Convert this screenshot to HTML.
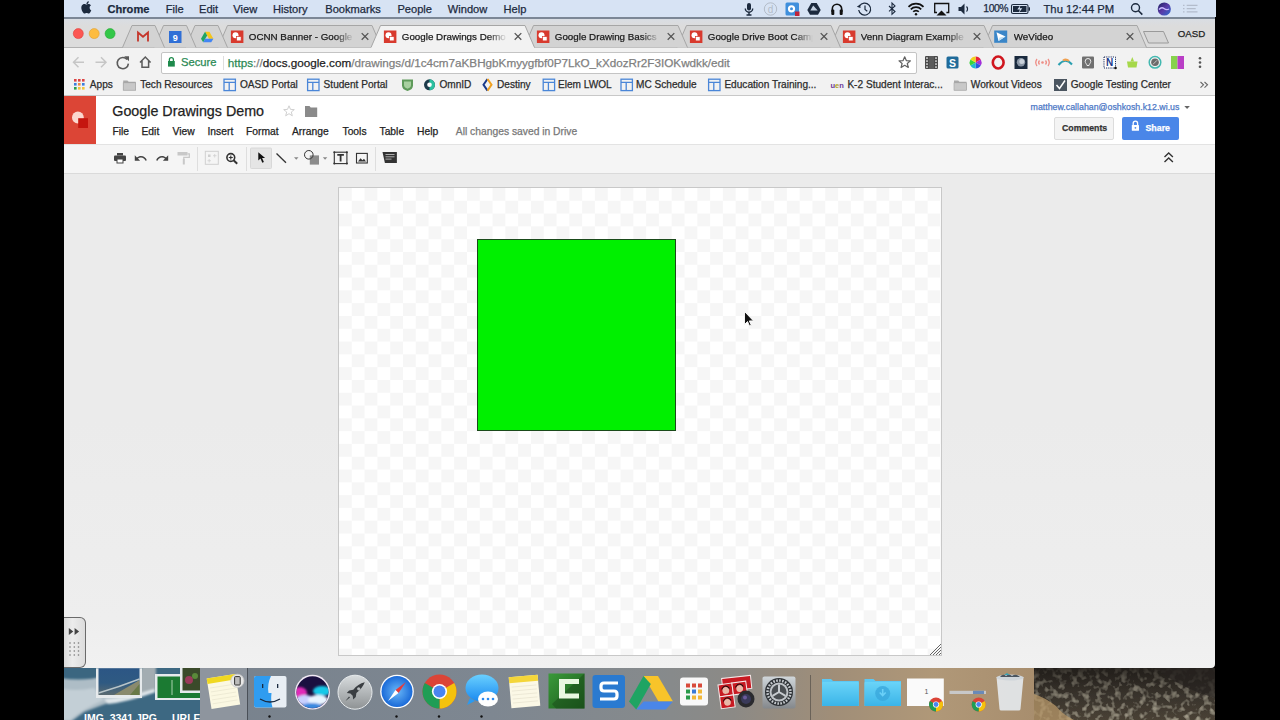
<!DOCTYPE html>
<html><head><meta charset="utf-8">
<style>
*{margin:0;padding:0;box-sizing:border-box}
html,body{width:1280px;height:720px;overflow:hidden;background:#000;font-family:"Liberation Sans",sans-serif;position:relative}
.a{position:absolute}
.t{position:absolute;white-space:nowrap;line-height:1;-webkit-text-stroke:0.25px currentColor}
svg{position:absolute;overflow:visible}
.mb{font-size:11.1px;color:#1c2a3e;top:4px}
.tabt{font-size:9.8px;color:#1a1a1a;top:32px}
.bm{font-size:10.1px;color:#2c2c2c;top:80px}
.menu{font-size:10.3px;color:#222;top:126.5px}
</style></head><body>
<!-- backgrounds -->
<div class="a" style="left:64px;top:0;width:1152px;height:17px;background:#d7e3f4"></div>
<div class="a" style="left:64px;top:17px;width:1151px;height:1.5px;background:#7c8796"></div>
<div class="a" style="left:64px;top:18.5px;width:1151px;height:29px;background:linear-gradient(#d9dde3,#dcdcdc 25%,#dcdcdc)"></div>
<div class="a" style="left:64px;top:47px;width:1151px;height:1px;background:#b0b0b0"></div>
<div class="a" style="left:64px;top:48px;width:1151px;height:47px;background:#f2f2f2"></div>
<div class="a" style="left:64px;top:95px;width:1151px;height:1px;background:#c8c8c8"></div>
<div class="a" style="left:160.5px;top:52px;width:756px;height:21.5px;background:#fff;border:1px solid #c4c4c4;border-radius:2px"></div>
<div class="a" style="left:64px;top:96px;width:1151px;height:48px;background:#fff"></div>
<div class="a" style="left:64px;top:96px;width:32px;height:48px;background:#dc4536"></div>
<div class="a" style="left:64px;top:144px;width:1151px;height:1px;background:#e3e3e3"></div>
<div class="a" style="left:64px;top:145px;width:1151px;height:28px;background:#f5f5f5"></div>
<div class="a" style="left:64px;top:173px;width:1151px;height:1px;background:#dadada"></div>
<div class="a" style="left:64px;top:174px;width:1151px;height:494px;background:linear-gradient(#ebebeb 0%,#ebebeb 50%,#eeeeee 90%,#f1f1f1 100%);border-radius:0 0 4px 4px"></div>
<div class="a" style="left:338px;top:187px;width:604px;height:469px;border:1px solid #c8c8c8;
 background-color:#fff;
 background-image:conic-gradient(#f6f6f6 25%,#fff 0 50%,#f6f6f6 0 75%,#fff 0);
 background-size:25.6px 25.6px;background-position:12.8px 0"></div>
<div class="a" style="left:476.5px;top:239px;width:199px;height:192px;background:#00f000;border:1px solid #1a4a1a"></div>
<svg style="left:0;top:0" width="1280" height="720">
<!-- apple -->
<g fill="#1c2a3e" transform="translate(80.8,1.2) scale(0.92)">
<path d="M9.6 7.1c0-1.7 1.4-2.5 1.5-2.6-.8-1.2-2.1-1.3-2.5-1.4-1-.1-2 .6-2.5.6s-1.3-.6-2.2-.6C2.8 3.1 1.7 3.8 1.1 4.8c-1.2 2.1-.3 5.2.9 6.9.6.8 1.2 1.7 2.1 1.7.8 0 1.2-.5 2.2-.5s1.3.5 2.2.5c.9 0 1.5-.9 2-1.7.6-.9.9-1.8.9-1.8s-1.8-.7-1.8-2.8z"/>
<path d="M8 2.1c.5-.6.8-1.3.7-2-.7 0-1.5.5-1.9 1-.4.5-.8 1.3-.7 2 .7.1 1.4-.4 1.9-1z"/>
</g>
<!-- mic -->
<g fill="none" stroke="#1c2a3e" stroke-width="1.4">
<rect x="747" y="3" width="4" height="7.5" rx="2" fill="#1c2a3e" stroke="none"/>
<path d="M745.3 8.5 a3.7 3.7 0 0 0 7.4 0"/>
<path d="M749 12.3 V15 M746.5 15 H751.5"/>
</g>
<!-- d circle -->
<circle cx="770.5" cy="9" r="6.2" fill="none" stroke="#b3bcc8" stroke-width="1"/>
<text x="770.5" y="12.8" font-size="10" text-anchor="middle" fill="#b3bcc8" font-family="Liberation Sans">d</text>
<!-- blue square app -->
<rect x="785.5" y="2.5" width="13.5" height="13" rx="1.5" fill="#3f8fdc"/>
<circle cx="791.5" cy="8.8" r="3.6" fill="#fff"/>
<circle cx="791.5" cy="8.8" r="1.5" fill="#3f8fdc"/>
<rect x="795" y="11.5" width="4.5" height="4.5" fill="#c0243a"/>
<!-- drive -->
<path d="M811.3 3 h5.4 l4 7 -2.7 4.7 h-8 l-2.7-4.7z" fill="#1c2a3e"/>
<path d="M813.2 5.5 l-2.9 5 h7.4z" fill="#d7e3f4" opacity="0.9"/>
<!-- headphones -->
<path d="M832.3 12 v-3 a4.7 4.7 0 0 1 9.4 0 v3" fill="none" stroke="#111" stroke-width="1.6"/>
<rect x="831.3" y="9.5" width="3" height="5.5" rx="1" fill="#111"/>
<rect x="839.7" y="9.5" width="3" height="5.5" rx="1" fill="#111"/>
<!-- time machine -->
<path d="M859.5 6 a6 6 0 1 1 -0.8 4" fill="none" stroke="#1c2a3e" stroke-width="1.3"/>
<path d="M856.8 6.8 l3.2-2.4 0.6 3.6z" fill="#1c2a3e"/>
<path d="M865 5.5 v4 l2.3 1.7" fill="none" stroke="#1c2a3e" stroke-width="1.2"/>
<!-- bluetooth -->
<path d="M889 6 l6 5.5 -3 2.8 v-11.2 l3 2.8 -6 5.5" fill="none" stroke="#1c2a3e" stroke-width="1.1"/>
<!-- wifi -->
<g fill="none" stroke="#111" stroke-width="1.7">
<path d="M908.5 6.8 a10.5 10.5 0 0 1 15 0"/>
<path d="M910.8 9.3 a7.2 7.2 0 0 1 10.4 0"/>
<path d="M913.2 11.8 a3.8 3.8 0 0 1 5.6 0"/>
</g>
<circle cx="916" cy="14.3" r="1.2" fill="#111"/>
<!-- airplay -->
<path d="M937 12.5 h-2.3 v-9 h14 v9 h-2.3" fill="none" stroke="#111" stroke-width="1.3"/>
<path d="M936.5 15.5 l5-5 5 5z" fill="#111"/>
<!-- volume -->
<path d="M958.5 7 h2.5 l3.5-3.5 v11 l-3.5-3.5 h-2.5z" fill="#1c2a3e"/>
<path d="M966.5 6.5 a3.5 3.5 0 0 1 0 5" fill="none" stroke="#1c2a3e" stroke-width="1.2"/>
<!-- battery -->
<rect x="1011.5" y="4.5" width="16.5" height="9" rx="1.5" fill="none" stroke="#1c2a3e" stroke-width="1.1"/>
<rect x="1028.5" y="7.3" width="1.5" height="3.4" fill="#1c2a3e"/>
<rect x="1013" y="6" width="13.5" height="6" fill="#1c2a3e"/>
<path d="M1020.5 5 l-3.2 4.5 h2.6 l-1.2 3.6 3.6-4.8 h-2.6z" fill="#d7e3f4"/>
<!-- search -->
<circle cx="1135.5" cy="7.8" r="4" fill="none" stroke="#1c2a3e" stroke-width="1.4"/>
<path d="M1138.5 10.8 l3.8 3.8" stroke="#1c2a3e" stroke-width="1.6"/>
<!-- siri -->
<defs><linearGradient id="siri" x1="0" y1="0" x2="1" y2="1"><stop offset="0" stop-color="#1b1e5e"/><stop offset="0.5" stop-color="#5a3aa8"/><stop offset="1" stop-color="#2a6fd0"/></linearGradient></defs>
<circle cx="1164.3" cy="9" r="6.6" fill="url(#siri)"/>
<path d="M1159 9.5 q2.5-3 5-1 t5 0.5" fill="none" stroke="#c8b8ff" stroke-width="1.4"/>
<!-- list -->
<g stroke="#b3bccb" stroke-width="1.3">
<path d="M1183 5.4 h1.5 M1183 8.6 h1.5 M1183 11.8 h1.5"/>
<path d="M1186.7 5.4 h10.8 M1186.7 8.6 h9 M1186.7 11.8 h10.8"/>
</g>
</svg>
<svg style="left:0;top:0" width="1280" height="720">
<circle cx="78.3" cy="33.6" r="5" fill="#fc5753" stroke="#df3e3a" stroke-width="0.6"/>
<circle cx="94.2" cy="33.6" r="5" fill="#fdbc40" stroke="#de9f34" stroke-width="0.6"/>
<circle cx="110.1" cy="33.6" r="5" fill="#33c748" stroke="#27aa35" stroke-width="0.6"/>

<path d="M983 47.5 L992.5 25.5 L1137.0 25.5 L1146.5 47.5" fill="#d3d3d3" stroke="#a6a6a6" stroke-width="1"/>
<path d="M830 47.5 L839.5 25.5 L984.0 25.5 L993.5 47.5" fill="#d3d3d3" stroke="#a6a6a6" stroke-width="1"/>
<path d="M677 47.5 L686.5 25.5 L831.0 25.5 L840.5 47.5" fill="#d3d3d3" stroke="#a6a6a6" stroke-width="1"/>
<path d="M524 47.5 L533.5 25.5 L678.0 25.5 L687.5 47.5" fill="#d3d3d3" stroke="#a6a6a6" stroke-width="1"/>
<path d="M218 47.5 L227.5 25.5 L372.0 25.5 L381.5 47.5" fill="#d3d3d3" stroke="#a6a6a6" stroke-width="1"/>
<path d="M185.5 47.5 L195.0 25.5 L218.0 25.5 L227.5 47.5" fill="#d3d3d3" stroke="#a6a6a6" stroke-width="1"/>
<path d="M154 47.5 L163.5 25.5 L186.5 25.5 L196 47.5" fill="#d3d3d3" stroke="#a6a6a6" stroke-width="1"/>
<path d="M122.5 47.5 L132.0 25.5 L155.0 25.5 L164.5 47.5" fill="#d3d3d3" stroke="#a6a6a6" stroke-width="1"/>
<path d="M371 47.5 L380.5 25.5 L525.0 25.5 L534.5 47.5" fill="#f2f2f2" stroke="#a6a6a6" stroke-width="1"/>
<rect x="371.5" y="47" width="162.5" height="1.5" fill="#f2f2f2"/>
<rect x="230.9" y="30.5" width="12.5" height="12.5" fill="#d83a2e"/><circle cx="235.5" cy="35.3" r="3" fill="#fff"/><rect x="236.5" y="36.5" width="4.6" height="4.4" fill="#fff" stroke="#d83a2e" stroke-width="0.7"/>
<rect x="383.9" y="30.5" width="12.5" height="12.5" fill="#d83a2e"/><circle cx="388.5" cy="35.3" r="3" fill="#fff"/><rect x="389.5" y="36.5" width="4.6" height="4.4" fill="#fff" stroke="#d83a2e" stroke-width="0.7"/>
<rect x="536.9" y="30.5" width="12.5" height="12.5" fill="#d83a2e"/><circle cx="541.5" cy="35.3" r="3" fill="#fff"/><rect x="542.5" y="36.5" width="4.6" height="4.4" fill="#fff" stroke="#d83a2e" stroke-width="0.7"/>
<rect x="689.9" y="30.5" width="12.5" height="12.5" fill="#d83a2e"/><circle cx="694.5" cy="35.3" r="3" fill="#fff"/><rect x="695.5" y="36.5" width="4.6" height="4.4" fill="#fff" stroke="#d83a2e" stroke-width="0.7"/>
<rect x="842.9" y="30.5" width="12.5" height="12.5" fill="#d83a2e"/><circle cx="847.5" cy="35.3" r="3" fill="#fff"/><rect x="848.5" y="36.5" width="4.6" height="4.4" fill="#fff" stroke="#d83a2e" stroke-width="0.7"/>
<rect x="994.2" y="30.5" width="13" height="12.3" fill="#3a86c8"/>
<path d="M996.5 32.2 L1005.5 36.5 L998.5 41 Z" fill="#fff"/>
<path d="M999.5 37.5 L1005.5 36.5 L998.5 41 Z" fill="#bfe0f5"/>
<path d="M361.7 33.1 L368.3 39.699999999999996 M368.3 33.1 L361.7 39.699999999999996" stroke="#555" stroke-width="1.3"/>
<path d="M514.7 33.1 L521.3 39.699999999999996 M521.3 33.1 L514.7 39.699999999999996" stroke="#555" stroke-width="1.3"/>
<path d="M667.7 33.1 L674.3 39.699999999999996 M674.3 33.1 L667.7 39.699999999999996" stroke="#555" stroke-width="1.3"/>
<path d="M820.7 33.1 L827.3 39.699999999999996 M827.3 33.1 L820.7 39.699999999999996" stroke="#555" stroke-width="1.3"/>
<path d="M973.7 33.1 L980.3 39.699999999999996 M980.3 33.1 L973.7 39.699999999999996" stroke="#555" stroke-width="1.3"/>
<path d="M1126.7 33.1 L1133.3 39.699999999999996 M1133.3 33.1 L1126.7 39.699999999999996" stroke="#555" stroke-width="1.3"/>
<path d="M138 41.5 V32.5 L143 36.8 L148 32.5 V41.5" fill="none" stroke="#c5362b" stroke-width="1.8" stroke-linejoin="miter"/>
<rect x="169" y="31" width="12.5" height="12" fill="#2f6fd6"/><text x="175.3" y="40.8" font-size="9" font-weight="bold" text-anchor="middle" fill="#fff" font-family="Liberation Sans">9</text>
<path d="M205 31.8 h4.4 l4 7 h-4.4z" fill="#f5c518"/><path d="M205 31.8 l2.2 3.8 -4 6.7 -2.2 -3.5z" fill="#1fa463"/><path d="M205.2 38.8 h8.2 l-2.2 3.5 h-8z" fill="#4285f4"/>
<path d="M1143.5 31.5 h20 l5 11.5 h-20z" fill="#d6d6d6" stroke="#9a9a9a" stroke-width="1"/>
</svg><svg style="left:0;top:0" width="1280" height="720">
<!-- back / forward -->
<g fill="none" stroke="#c6c6c6" stroke-width="1.5">
<path d="M84 62.2 H73.5 M78.5 57.2 L73.5 62.2 L78.5 67.2"/>
<path d="M95.5 62.2 H106 M101 57.2 L106 62.2 L101 67.2"/>
</g>
<!-- reload -->
<path d="M127.2 59.6 A5.6 5.6 0 1 0 128.4 63.6" fill="none" stroke="#5b5b5b" stroke-width="1.6"/>
<path d="M124.2 56.3 L129 56.3 L129 61.2 Z" fill="#5b5b5b"/>
<!-- home -->
<path d="M140 62.5 L145.3 57 L150.6 62.5 M142 61 V67.3 H148.6 V61" fill="none" stroke="#5b5b5b" stroke-width="1.5"/>
<!-- lock -->
<rect x="168" y="61" width="6.8" height="5.6" fill="#1e8a4c"/>
<path d="M169.4 61 V59.6 a2 2 0 0 1 4 0 V61" fill="none" stroke="#1e8a4c" stroke-width="1.3"/>
<!-- star -->
<path d="M904.7 56.8 L906.3 60.6 L910.4 60.9 L907.3 63.5 L908.3 67.5 L904.7 65.3 L901.1 67.5 L902.1 63.5 L899 60.9 L903.1 60.6 Z" fill="none" stroke="#606060" stroke-width="1.2" stroke-linejoin="round"/>
<!-- extensions -->
<rect x="925" y="56" width="13" height="13" rx="1" fill="#4a4a4a"/>
<g fill="#ddd"><rect x="926.2" y="57.3" width="1.6" height="1.6"/><rect x="926.2" y="60.3" width="1.6" height="1.6"/><rect x="926.2" y="63.3" width="1.6" height="1.6"/><rect x="926.2" y="66.3" width="1.6" height="1.6"/>
<rect x="935.2" y="57.3" width="1.6" height="1.6"/><rect x="935.2" y="60.3" width="1.6" height="1.6"/><rect x="935.2" y="63.3" width="1.6" height="1.6"/><rect x="935.2" y="66.3" width="1.6" height="1.6"/></g>
<rect x="929" y="56" width="5" height="13" fill="#5a5a5a"/>
<rect x="946.5" y="56.5" width="12" height="12" rx="1.5" fill="#1f6b9a"/>
<text x="952.5" y="66.5" font-size="10.5" font-weight="bold" text-anchor="middle" fill="#fff" font-family="Liberation Sans">S</text>
<!-- color wheel -->
<g transform="translate(975.6,62.5)">
<path d="M0 0 L0 -6 A6 6 0 0 1 5.2 -3z" fill="#e8213b"/>
<path d="M0 0 L5.2 -3 A6 6 0 0 1 5.2 3z" fill="#a52fd8"/>
<path d="M0 0 L5.2 3 A6 6 0 0 1 0 6z" fill="#2b56e0"/>
<path d="M0 0 L0 6 A6 6 0 0 1 -5.2 3z" fill="#1fb9d0"/>
<path d="M0 0 L-5.2 3 A6 6 0 0 1 -5.2 -3z" fill="#3ad43a"/>
<path d="M0 0 L-5.2 -3 A6 6 0 0 1 0 -6z" fill="#f2d21c"/>
</g>
<!-- opera -->
<ellipse cx="998.2" cy="62.5" rx="5.4" ry="6" fill="none" stroke="#d0161e" stroke-width="2.6"/>
<!-- dark circle -->
<rect x="1014.5" y="56" width="13" height="13" fill="#1a2a3e"/>
<circle cx="1021" cy="62.2" r="4.2" fill="#8b97a6"/>
<circle cx="1021.8" cy="61.6" r="2.5" fill="#c9d1da"/>
<!-- red wifi -->
<g fill="none" stroke="#ee8d85" stroke-width="1.3">
<path d="M1037 59 a6 6 0 0 0 0 7 M1048 59 a6 6 0 0 1 0 7"/>
<path d="M1039.5 60.5 a3 3 0 0 0 0 4 M1045.5 60.5 a3 3 0 0 1 0 4"/>
</g>
<circle cx="1042.5" cy="62.5" r="1.3" fill="#ee8d85"/>
<!-- rainbow arc -->
<path d="M1058.5 65 Q1065 57 1072 64.5" fill="none" stroke="#2a9fb0" stroke-width="2"/>
<path d="M1063 60.5 Q1066 58.5 1069 61" fill="none" stroke="#f0a050" stroke-width="2"/>
<!-- gray location -->
<rect x="1082" y="56.5" width="12" height="12" rx="1" fill="#707070"/>
<path d="M1088 58.5 a2.8 2.8 0 0 1 2.8 2.8 c0 1.8 -1.6 2.6 -1.8 4.2 h-2 c-.2-1.6-1.8-2.4-1.8-4.2 a2.8 2.8 0 0 1 2.8-2.8z" fill="none" stroke="#eee" stroke-width="1"/>
<!-- N -->
<rect x="1104" y="57" width="11.5" height="11" fill="#fff" stroke="#1a2a5a" stroke-width="1" stroke-dasharray="1.2 1"/>
<text x="1109.7" y="66.3" font-size="10" font-weight="bold" text-anchor="middle" fill="#1c3a8c" font-family="Liberation Sans">N</text>
<circle cx="1115.5" cy="68" r="1.3" fill="#111"/>
<!-- green basket -->
<path d="M1127 61.5 h10.5 l-1 6 h-8.5z" fill="#a6d84a"/>
<path d="M1130.5 61.5 l1.8-4.5 l1.8 4.5" fill="#a6d84a"/>
<!-- teal circle -->
<circle cx="1155" cy="62.3" r="5.8" fill="none" stroke="#43b8b0" stroke-width="1.5"/>
<circle cx="1155" cy="62.3" r="3.8" fill="#6b6b6b"/>
<path d="M1153 64.3 l4-4" stroke="#ddd" stroke-width="0.8"/>
<!-- green/pink -->
<rect x="1171" y="56" width="6.5" height="13" fill="#86d24c"/>
<rect x="1177.5" y="56" width="6.5" height="13" fill="#b93ec6"/>
<!-- dots -->
<circle cx="1200" cy="58.3" r="1.3" fill="#555"/><circle cx="1200" cy="62.5" r="1.3" fill="#555"/><circle cx="1200" cy="66.7" r="1.3" fill="#555"/>

<!-- BOOKMARK ICONS -->
<!-- apps grid -->
<g>
<rect x="74" y="79" width="2.6" height="2.6" fill="#d44"/><rect x="78" y="79" width="2.6" height="2.6" fill="#d44"/><rect x="82" y="79" width="2.6" height="2.6" fill="#d44"/>
<rect x="74" y="83" width="2.6" height="2.6" fill="#3b7ddd"/><rect x="78" y="83" width="2.6" height="2.6" fill="#e84"/><rect x="82" y="83" width="2.6" height="2.6" fill="#3b7ddd"/>
<rect x="74" y="87" width="2.6" height="2.6" fill="#2a9f4f"/><rect x="78" y="87" width="2.6" height="2.6" fill="#f2c53d"/><rect x="82" y="87" width="2.6" height="2.6" fill="#f2c53d"/>
</g>
<!-- folders -->
<g id="fold">
<path d="M123.2 80.5 h4.2 l1.3 1.3 h7 v8.4 h-12.5z" fill="#a9a9a9"/>
<rect x="123.2" y="82.8" width="12.5" height="7.4" fill="#c8c8c8" stroke="#a0a0a0" stroke-width="0.6"/>
</g>
<path d="M954 80.5 h4.2 l1.3 1.3 h7 v8.4 h-12.5z" fill="#a9a9a9"/>
<rect x="954" y="82.8" width="12.5" height="7.4" fill="#c8c8c8" stroke="#a0a0a0" stroke-width="0.6"/>
<!-- blue doc icons -->
<g fill="none" stroke="#4a86d8" stroke-width="1.3">
<rect x="224" y="79.2" width="11.4" height="11.4"/><path d="M224 82.3 h11.4 M229.2 82.3 v8.3"/>
<rect x="307.6" y="79.2" width="11.4" height="11.4"/><path d="M307.6 82.3 h11.4 M312.8 82.3 v8.3"/>
<rect x="543.2" y="79.2" width="11.4" height="11.4"/><path d="M543.2 82.3 h11.4 M548.4 82.3 v8.3"/>
<rect x="621" y="79.2" width="11.4" height="11.4"/><path d="M621 82.3 h11.4 M626.2 82.3 v8.3"/>
<rect x="708.6" y="79.2" width="11.4" height="11.4"/><path d="M708.6 82.3 h11.4 M713.8 82.3 v8.3"/>
</g>
<!-- green shield -->
<path d="M402 79.5 h11 v6 q0 4 -5.5 5.5 q-5.5 -1.5 -5.5 -5.5z" fill="#5e9a5a"/>
<path d="M404 81.5 h7 v3.5 q0 2.5 -3.5 3.8 q-3.5 -1.3 -3.5 -3.8z" fill="#a8d0a0"/>
<!-- omnid -->
<circle cx="429.5" cy="84.8" r="5.5" fill="#1c3a4a"/>
<path d="M429.5 79.3 a5.5 5.5 0 0 1 0 11z" fill="#2cc0a0"/>
<circle cx="429.5" cy="84.8" r="2.3" fill="#fff"/>
<!-- destiny -->
<path d="M487.5 79 l-4 5.8 l4 5.8" fill="none" stroke="#1a3a8a" stroke-width="2"/>
<path d="M487.5 79 l4 5.8 l-4 5.8" fill="none" stroke="#f0a020" stroke-width="2"/>
<!-- uen -->
<text x="830.5" y="88" font-size="7.5" font-weight="bold" fill="#6a3a9a" font-family="Liberation Sans">u<tspan fill="#b0a020">e</tspan>n</text>
<!-- google testing center -->
<rect x="1054" y="79" width="13" height="12" fill="#4a5560"/>
<path d="M1056.5 85 l3 3.5 l5.5 -8" fill="none" stroke="#fff" stroke-width="1.5"/>
<!-- chevrons -->
<path d="M1200.5 82 l3 2.8 -3 2.8 M1204.5 82 l3 2.8 -3 2.8" fill="none" stroke="#666" stroke-width="1.1"/>
</svg>
<svg style="left:0;top:0" width="1280" height="720">
<!-- drawings logo -->
<circle cx="77.9" cy="117.5" r="5.9" fill="#fbd8d0"/>
<rect x="78.2" y="118.2" width="9.8" height="9.8" fill="#c5160f"/>
<!-- star -->
<path d="M289 105.8 L290.5 109.4 L294.3 109.6 L291.3 112 L292.3 115.8 L289 113.7 L285.7 115.8 L286.7 112 L283.7 109.6 L287.5 109.4 Z" fill="none" stroke="#d0d0d0" stroke-width="1"/>
<!-- folder -->
<path d="M305 106 h4.5 l1.2 1.5 h6.5 v9.5 h-12.2z" fill="#8a8a8a"/>
<!-- email dropdown -->
<path d="M1184.3 106 h5.6 l-2.8 3z" fill="#666"/>
<!-- collapse chevrons -->
<path d="M1164.5 157 l4.2 -4 4.2 4 M1164.5 162 l4.2 -4 4.2 4" fill="none" stroke="#333" stroke-width="1.4"/>

<!-- TOOLS -->
<!-- print -->
<rect x="117" y="153" width="6" height="2.5" fill="#444"/>
<rect x="114" y="155.5" width="12" height="5.5" rx="1" fill="#444"/>
<rect x="117" y="159" width="6" height="4" fill="#fff" stroke="#444" stroke-width="1"/>
<!-- undo -->
<path transform="translate(133.6,151.2) scale(0.59)" d="M12.5 8c-2.65 0-5.05.99-6.9 2.6L2 7v9h9l-3.62-3.62c1.39-1.16 3.160-1.880 5.120-1.880 3.540 0 6.550 2.310 7.600 5.500l2.370-.780C21.080 11.030 17.150 8 12.500 8z" fill="#444"/>
<!-- redo -->
<path transform="translate(155.2,151.2) scale(0.59)" d="M18.4 10.6C16.55 8.99 14.15 8 11.5 8c-4.65 0-8.58 3.03-9.96 7.22L3.9 16c1.05-3.19 4.05-5.5 7.6-5.5 1.95 0 3.73.72 5.12 1.88L13 16h9V7l-3.6 3.6z" fill="#444"/>
<!-- paint format -->
<rect x="177.5" y="152" width="10" height="3.5" fill="#c8c8c8"/>
<path d="M187.5 153.8 h1.8 v3.5 h-5.5 v2" fill="none" stroke="#c8c8c8" stroke-width="1.3"/>
<rect x="182.8" y="159" width="2" height="5.5" fill="#c8c8c8"/>
<!-- separators -->
<rect x="197" y="147" width="1" height="24" fill="#dedede"/>
<rect x="246" y="147" width="1" height="24" fill="#dedede"/>
<rect x="375" y="147" width="1" height="24" fill="#dedede"/>
<!-- box -->
<rect x="205.3" y="151.3" width="13" height="13" fill="none" stroke="#d0d0d0" stroke-width="1"/>
<rect x="208" y="154.5" width="2.5" height="2.5" fill="#d0d0d0"/>
<path d="M213 155.7 h3.5 M214.7 154 v3.5 M207.5 160.7 h3.5 M209.2 159 v3.5" stroke="#d0d0d0" stroke-width="0.8"/>
<!-- zoom -->
<circle cx="230.8" cy="157.5" r="3.9" fill="none" stroke="#333" stroke-width="1.6"/>
<path d="M233.6 160.3 l3.6 3.5" stroke="#333" stroke-width="2"/>
<path d="M228.8 157.5 h4 M230.8 155.5 v4" stroke="#333" stroke-width="1.1"/>
<!-- select pressed -->
<rect x="250.5" y="148" width="21" height="20.5" rx="1" fill="#e5e5e5" stroke="#d8d8d8" stroke-width="1"/>
<path d="M258.3 152.3 v8.3 l2.2 -2 l1.8 4.2 l1.6 -0.7 l-1.8 -4 h3z" fill="#111"/>
<!-- line -->
<path d="M276.5 153.5 L286 162.8" stroke="#333" stroke-width="1.3"/>
<path d="M294 157.3 h4.5 l-2.25 2.4z" fill="#888"/>
<!-- shape -->
<rect x="309.8" y="155.4" width="9.2" height="9.2" fill="#8c8c8c"/>
<circle cx="308.8" cy="154.8" r="4.3" fill="none" stroke="#333" stroke-width="1"/>
<path d="M322.8 157.3 h4.5 l-2.25 2.4z" fill="#888"/>
<!-- textbox -->
<rect x="334.3" y="152.2" width="12.6" height="11.4" fill="none" stroke="#333" stroke-width="1.1"/>
<circle cx="334.3" cy="152.2" r="1" fill="#333"/><circle cx="346.9" cy="152.2" r="1" fill="#333"/><circle cx="334.3" cy="163.6" r="1" fill="#333"/><circle cx="346.9" cy="163.6" r="1" fill="#333"/>
<path d="M337.3 154.8 h6.6 M340.6 154.8 v6.6" stroke="#333" stroke-width="1.8"/>
<!-- image -->
<rect x="356.5" y="153.4" width="10.8" height="9.6" fill="none" stroke="#333" stroke-width="1.1"/>
<path d="M358 161.5 l2.5 -3.3 l2 2 l1.5 -1.5 l2 2.8z" fill="#333"/>
<!-- comment -->
<path d="M382.5 152 h14.4 v10.9 h-12 z" fill="#333"/>
<path d="M385.5 154.5 h9 M385.5 156.8 h9 M385.5 159.1 h6" stroke="#bbb" stroke-width="0.9"/>
<!-- cursor -->
<path d="M744.5 311.5 v13 l3 -3 l2 4.5 l1.8 -0.8 l-2 -4.3 h4.2z" fill="#111" stroke="#fff" stroke-width="0.9"/>
<!-- resize grip -->
<path d="M930 655 L941 644 M933 655 L941 647 M936 655 L941 650 M939 655 L941 653" stroke="#555" stroke-width="0.9"/>
</svg>
<!-- menubar text -->
<span class="t mb" style="left:107.5px;font-weight:bold">Chrome</span>
<span class="t mb" style="left:165.8px;">File</span>
<span class="t mb" style="left:199px;">Edit</span>
<span class="t mb" style="left:233.3px;">View</span>
<span class="t mb" style="left:273px;">History</span>
<span class="t mb" style="left:325.3px;">Bookmarks</span>
<span class="t mb" style="left:397.4px;">People</span>
<span class="t mb" style="left:447.8px;">Window</span>
<span class="t mb" style="left:503.6px;">Help</span>
<span class="t mb" style="left:983.3px;top:3.6px;font-size:10.4px;letter-spacing:-0.45px">100%</span>
<span class="t mb" style="left:1043.5px;font-size:11.25px">Thu 12:44 PM</span>
<!-- tab titles -->
<span class="t tabt" style="left:248.8px;width:105.5px;overflow:hidden;-webkit-mask-image:linear-gradient(90deg,#000 82%,transparent 100%)">OCNN Banner - Google Drawings</span>
<span class="t tabt" style="left:401.8px;width:105.5px;overflow:hidden;-webkit-mask-image:linear-gradient(90deg,#000 82%,transparent 100%)">Google Drawings Demo</span>
<span class="t tabt" style="left:554.8px;width:105.5px;overflow:hidden;-webkit-mask-image:linear-gradient(90deg,#000 82%,transparent 100%)">Google Drawing Basics</span>
<span class="t tabt" style="left:707.8px;width:105.5px;overflow:hidden;-webkit-mask-image:linear-gradient(90deg,#000 82%,transparent 100%)">Google Drive Boot Camp</span>
<span class="t tabt" style="left:860.8px;width:105.5px;overflow:hidden;-webkit-mask-image:linear-gradient(90deg,#000 82%,transparent 100%)">Venn Diagram Example</span>
<span class="t tabt" style="left:1013.8px;width:105.5px;overflow:hidden;-webkit-mask-image:linear-gradient(90deg,#000 82%,transparent 100%)">WeVideo</span>
<span class="t" style="left:1177.8px;top:28.6px;font-size:9.7px;color:#222">OASD</span><!-- omnibox text -->
<span class="t" style="left:181px;top:57px;font-size:11.2px;color:#2b8a55">Secure</span>
<div class="a" style="left:222.5px;top:55.5px;width:1px;height:14px;background:#dedede"></div>
<span class="t" style="left:227.7px;top:56.5px;font-size:11.7px;color:#808080"><span style="color:#2b8a55">https</span>://<span style="color:#222">docs.google.com</span>/drawings/d/1c4cm7aKBHgbKmyygfbf0P7LkO_kXdozRr2F3IOKwdkk/edit</span>
<!-- bookmarks -->
<span class="t bm" style="left:89.8px">Apps</span>
<span class="t bm" style="left:140.2px">Tech Resources</span>
<span class="t bm" style="left:240px">OASD Portal</span>
<span class="t bm" style="left:323.6px">Student Portal</span>
<span class="t bm" style="left:439.4px">OmnID</span>
<span class="t bm" style="left:497px">Destiny</span>
<span class="t bm" style="left:558px">Elem LWOL</span>
<span class="t bm" style="left:636px">MC Schedule</span>
<span class="t bm" style="left:724.4px">Education Training...</span>
<span class="t bm" style="left:847.4px">K-2 Student Interac...</span>
<span class="t bm" style="left:970.8px">Workout Videos</span>
<span class="t bm" style="left:1070.7px">Google Testing Center</span>
<!-- docs header -->
<span class="t" style="left:112.3px;top:104px;font-size:14.3px;color:#222">Google Drawings Demo</span>
<span class="t menu" style="left:112.5px">File</span>
<span class="t menu" style="left:141.5px">Edit</span>
<span class="t menu" style="left:172.5px">View</span>
<span class="t menu" style="left:207.5px">Insert</span>
<span class="t menu" style="left:246px">Format</span>
<span class="t menu" style="left:292px">Arrange</span>
<span class="t menu" style="left:342.5px">Tools</span>
<span class="t menu" style="left:379.5px">Table</span>
<span class="t menu" style="left:417px">Help</span>
<span class="t menu" style="left:455.8px;color:#777">All changes saved in Drive</span>
<span class="t" style="left:1030.6px;top:103px;font-size:8.8px;color:#4d78c6">matthew.callahan@oshkosh.k12.wi.us</span>
<div class="a" style="left:1054.4px;top:117px;width:59.6px;height:22.6px;background:#f4f4f4;border:1px solid #dcdcdc;border-radius:2px"></div>
<span class="t" style="left:1062px;top:124px;font-size:8.75px;font-weight:bold;color:#333">Comments</span>
<div class="a" style="left:1122px;top:117.2px;width:57px;height:22.5px;background:#4a86e8;border-radius:2px"></div>
<span class="t" style="left:1145.5px;top:124px;font-size:8.8px;font-weight:bold;color:#fff">Share</span>

<svg style="left:0;top:0" width="1280" height="720">
<!-- share lock -->
<rect x="1131.8" y="125" width="7.2" height="5.8" rx="0.5" fill="#fff"/>
<path d="M1133.2 125 v-1.6 a2.2 2.2 0 0 1 4.4 0 v1.6" fill="none" stroke="#fff" stroke-width="1.3"/>
<circle cx="1135.4" cy="127.8" r="0.9" fill="#4a86e8"/>
</svg>
<!-- DESKTOP WALLPAPER LEFT -->
<svg style="left:64px;top:668px;overflow:hidden" width="136" height="52" viewBox="0 0 136 52">
<defs>
<filter id="fb" x="-10%" y="-10%" width="120%" height="120%"><feGaussianBlur stdDeviation="1.2"/></filter>
<linearGradient id="ph1" x1="0" y1="0" x2="0" y2="1"><stop offset="0" stop-color="#2c5685"/><stop offset="0.55" stop-color="#2f5a82"/><stop offset="1" stop-color="#5a6a70"/></linearGradient>
</defs>
<rect width="136" height="52" fill="#3d6882"/>
<g filter="url(#fb)">
<path d="M-4 10 Q20 14 40 8 L60 30 Q40 36 20 44 L4 56 H-4z" fill="#aebdc6"/>
<path d="M-4 20 Q10 24 30 20 L40 32 Q20 40 6 52 H-4z" fill="#c3cfd6"/>
<path d="M78 -2 H92 V22 Q80 24 70 31 Z" fill="#a3adb2"/>
<path d="M40 31 Q62 30 90 21 L92 24 Q64 34 44 36z" fill="#dfe6ea"/>
</g>
<rect x="0" y="0" width="32" height="9" fill="#3a6580" opacity="0.6" filter="url(#fb)"/>
<!-- photo 1 -->
<rect x="32" y="0.3" width="46" height="29.7" fill="#e6eaec"/>
<rect x="34.5" y="0.3" width="41" height="26.7" fill="url(#ph1)"/>
<path d="M50 27 Q62 20 75.5 12 V27z" fill="#8a8a6e"/>
<path d="M34.5 25 Q55 19 75.5 11" fill="none" stroke="#b8c4c8" stroke-width="1.4"/>
<path d="M66 27 L75.5 16 V27z" fill="#6a7a48"/>
<!-- photo 2 green -->
<rect x="91" y="6" width="45" height="26" fill="#e6eaec"/>
<rect x="93.5" y="8.5" width="42.5" height="21.5" fill="#1b7a32"/>
<path d="M108 12 v15" stroke="#cfe8cf" stroke-width="0.8"/>
<!-- photo 3 -->
<rect x="116" y="-2" width="22" height="27" fill="#e6eaec"/>
<rect x="118.5" y="-2" width="19.5" height="24.5" fill="#3a4a2a"/>
<circle cx="125" cy="12" r="4" fill="#9a3a5a"/><circle cx="131" cy="8" r="3" fill="#5a8a3a"/>
<text x="20" y="54.2" font-size="10.5" font-weight="bold" fill="#fff" font-family="Liberation Sans">IMG_3341.JPG</text>
<text x="108" y="54.2" font-size="10.5" font-weight="bold" fill="#fff" font-family="Liberation Sans">URLFE</text>
</svg>
<!-- DESKTOP WALLPAPER RIGHT -->
<svg style="left:1034px;top:668px;overflow:hidden" width="181" height="52" viewBox="0 0 181 52">
<defs>
<filter id="mott" x="0" y="0" width="100%" height="100%">
<feTurbulence type="fractalNoise" baseFrequency="0.16" numOctaves="2" seed="3" result="n0"/><feGaussianBlur in="n0" stdDeviation="0.5" result="n"/>
<feColorMatrix in="n" type="matrix" values="0 0 0 0 0.58  0 0 0 0 0.54  0 0 0 0 0.42  0 0 0 3.5 -1.75" result="c"/>
<feComposite in="c" in2="SourceGraphic" operator="atop"/>
</filter>
<linearGradient id="wdark" x1="0" y1="0" x2="0" y2="1"><stop offset="0" stop-color="#231f1b" stop-opacity="0.85"/><stop offset="0.35" stop-color="#231f1b" stop-opacity="0.3"/><stop offset="1" stop-color="#231f1b" stop-opacity="0"/></linearGradient>
<linearGradient id="wpr" x1="0" y1="0" x2="0" y2="1"><stop offset="0" stop-color="#27231f"/><stop offset="0.5" stop-color="#3e3830"/><stop offset="1" stop-color="#4a4236"/></linearGradient>
</defs>
<rect width="181" height="52" fill="url(#wpr)"/>
<rect width="181" height="52" fill="url(#wpr)" filter="url(#mott)" opacity="0.7"/>
<rect width="181" height="52" fill="url(#wdark)"/>
<path d="M0 26 q12 4 22 12 q6 8 18 14 H0z" fill="#b8986a" opacity="0.75"/>
<path d="M120 0 h61 v30 q-30 -8 -61 -30z" fill="#26221f" opacity="0.7"/>
</svg>
<!-- DOCK -->
<div class="a" style="left:199.5px;top:668px;width:834.5px;height:52px;background:linear-gradient(90deg,#78828d 0%,#7e8791 35%,#868a8c 55%,#8c8a86 64%,#a08e78 76%,#b09878 88%,#a88e6e 100%)"></div>
<div class="a" style="left:199.5px;top:668px;width:47px;height:52px;background:#8e959e"></div>
<div class="a" style="left:247px;top:668px;width:1px;height:52px;background:#4a5058"></div>
<div class="a" style="left:810px;top:675px;width:1px;height:45px;background:#6a6258"></div>
<svg style="left:0;top:0" width="1280" height="720">
<!-- notes handoff -->
<g transform="rotate(-9 223.5 692)">
<rect x="209" y="676" width="29" height="31" fill="#fbf8e2"/>
<rect x="209" y="676" width="29" height="5.5" fill="#f0d820"/>
<path d="M211 686 h25 M211 690 h25 M211 694 h25 M211 698 h25 M211 702 h25" stroke="#e6e2cc" stroke-width="0.6"/>
</g>
<circle cx="237.4" cy="680.8" r="6.6" fill="#e8e8e8" stroke="#c8c8c8" stroke-width="0.8"/>
<rect x="234.6" y="676.6" width="5.6" height="8.4" rx="0.8" fill="#bbb" stroke="#333" stroke-width="1"/>
<!-- finder -->
<rect x="254" y="676" width="32.5" height="31.5" rx="2" fill="#e8eef4"/>
<path d="M254 676 h17 q-4 8 -2.5 17 h3 q-1 8 1 14.5 h-16.5 a2 2 0 0 1 -2 -2 v-27.5 a2 2 0 0 1 2 -2z" fill="#2f9cf0"/>
<path d="M260 699 q10 6 20 0" fill="none" stroke="#1a2a40" stroke-width="1.3"/>
<rect x="262" y="684" width="1.3" height="4" fill="#1a2a40"/><rect x="277" y="684" width="1.3" height="4" fill="#1a2a40"/>
<!-- siri -->
<defs>
<radialGradient id="sg" cx="0.5" cy="0.5" r="0.5"><stop offset="0" stop-color="#8a6ad8"/><stop offset="0.6" stop-color="#4a2a8a"/><stop offset="1" stop-color="#1a1a3a"/></radialGradient>
<linearGradient id="lp" x1="0" y1="0" x2="0" y2="1"><stop offset="0" stop-color="#9a9ea4"/><stop offset="1" stop-color="#5a5e64"/></linearGradient>
<radialGradient id="sf" cx="0.5" cy="0.5" r="0.5"><stop offset="0" stop-color="#6ab8f8"/><stop offset="1" stop-color="#1a6ad8"/></radialGradient>
<linearGradient id="msg" x1="0" y1="0" x2="0" y2="1"><stop offset="0" stop-color="#6ad0ff"/><stop offset="1" stop-color="#1a8af0"/></linearGradient>
<linearGradient id="cam" x1="0" y1="0" x2="1" y2="1"><stop offset="0" stop-color="#3a9a3a"/><stop offset="1" stop-color="#1a5a1a"/></linearGradient>
<linearGradient id="sys" x1="0" y1="0" x2="0" y2="1"><stop offset="0" stop-color="#d0d6da"/><stop offset="1" stop-color="#84888c"/></linearGradient>
<linearGradient id="fold2" x1="0" y1="0" x2="0" y2="1"><stop offset="0" stop-color="#6ad4f8"/><stop offset="1" stop-color="#3ab4e8"/></linearGradient>
</defs>
<defs>
<clipPath id="siriclip"><circle cx="312.5" cy="692.2" r="16"/></clipPath>
<filter id="sblur"><feGaussianBlur stdDeviation="1.2"/></filter>
<linearGradient id="lp2" x1="0" y1="0" x2="0" y2="1"><stop offset="0" stop-color="#d8dcde"/><stop offset="1" stop-color="#8e9294"/></linearGradient>
</defs>
<circle cx="312.5" cy="692.2" r="17.4" fill="#f0e8f4"/>
<g clip-path="url(#siriclip)">
<rect x="295" y="675" width="36" height="36" fill="#1a1040"/>
<g filter="url(#sblur)">
<ellipse cx="300" cy="693" rx="7" ry="6" fill="#e02ab8"/>
<ellipse cx="322" cy="691" rx="9" ry="5" fill="#18c8e8"/>
<ellipse cx="305" cy="700" rx="9" ry="5" fill="#c8d0ff"/>
<ellipse cx="318" cy="700" rx="10" ry="5" fill="#e8f4ff"/>
<ellipse cx="312" cy="706" rx="10" ry="3" fill="#3a8ae0"/>
</g>
</g>
<!-- launchpad -->
<circle cx="355" cy="692.2" r="17" fill="url(#lp2)" stroke="#e8ecee" stroke-width="1"/>
<path d="M364.8 682.3 q-7 1.5 -11.5 7.5 l-4.2 0.6 -2.3 2.6 3.6 0.5 2.3 2.3 0.5 3.6 2.6 -2.3 0.6 -4.2 q6 -4.5 8.4 -10.6z" fill="#3a3e42"/>
<path d="M349 696.5 l-3.5 4.5 4.5 -3.5z" fill="#3a3e42"/>
<circle cx="358.7" cy="688.8" r="1.6" fill="#b8bcbe"/>
<!-- safari -->
<circle cx="397" cy="691.5" r="16.8" fill="#fff"/>
<circle cx="397" cy="691.5" r="15.5" fill="url(#sf)"/>
<path d="M406 682 l-7.5 11 -3 -3z" fill="#e83a3a"/>
<path d="M388 701 l7.5 -11 3 3z" fill="#fff"/>
<!-- chrome -->
<circle cx="439.5" cy="691.5" r="17" fill="#db4437"/>
<path d="M439.5 691.5 L454.22 683.00 A17 17 0 0 1 439.50 708.50z" fill="#f4c20d"/>
<path d="M439.5 691.5 L439.50 708.50 A17 17 0 0 1 424.78 683.00z" fill="#1f9d55"/>
<circle cx="439.5" cy="691.5" r="7.6" fill="#fff"/>
<circle cx="439.5" cy="691.5" r="6" fill="#4a85f0"/>
<!-- messages -->
<ellipse cx="482" cy="688" rx="16.5" ry="13.5" fill="url(#msg)"/>
<path d="M470 698 l-3 7 l8 -4z" fill="#2a9af0"/>
<ellipse cx="488" cy="699" rx="10" ry="7.5" fill="#fff"/>
<circle cx="483" cy="699" r="1.3" fill="#2a8af0"/><circle cx="488" cy="699" r="1.3" fill="#2a8af0"/><circle cx="493" cy="699" r="1.3" fill="#2a8af0"/>
<!-- notes -->
<g transform="rotate(-5 524.5 691.5)">
<rect x="510" y="676" width="29" height="31" fill="#fbf8e6"/>
<rect x="510" y="676" width="29" height="6" fill="#f4d63a"/>
<path d="M512 686 h25 M512 690 h25 M512 694 h25 M512 698 h25 M512 702 h25" stroke="#e4dfcc" stroke-width="0.6"/>
</g>
<!-- camtasia -->
<rect x="548.5" y="673.5" width="36" height="35" fill="url(#cam)"/>
<path d="M552 704 l4 4.5 h28.5 v-35z" fill="#1a4a1a" opacity="0.5"/>
<path d="M579 679 h-20 v19.5 h20 v-5 h-14 v-9.5 h14z" fill="#e8f8e0"/>
<!-- snagit -->
<rect x="592.5" y="675" width="32.5" height="33" rx="3" fill="#2a7ad0"/>
<path d="M618 683 h-14 q-3 0 -3 3 v2 q0 3 3 3 h10 q3 0 3 3 v2 q0 3 -3 3 h-14" fill="none" stroke="#fff" stroke-width="3.2"/>
<!-- drive -->
<path d="M643.5 676 h14.5 l15 25.5 h-14.5z" fill="#f8c42a"/>
<path d="M643.5 676 l-14.5 25.5 l7.3 8 l14.5 -25.5z" fill="#1fa463"/>
<path d="M636.3 709.5 l7.3 -8 h29.4 l-7.2 8z" fill="#4a86e8"/>
<!-- apps grid -->
<rect x="680" y="677.5" width="28" height="28" rx="3" fill="#f8f8f8"/>
<g>
<rect x="686" y="683.5" width="4" height="4" fill="#d84a3a"/><rect x="692" y="683.5" width="4" height="4" fill="#d84a3a"/><rect x="698" y="683.5" width="4" height="4" fill="#d84a3a"/>
<rect x="686" y="689.5" width="4" height="4" fill="#2a9a4a"/><rect x="692" y="689.5" width="4" height="4" fill="#3a7ad8"/><rect x="698" y="689.5" width="4" height="4" fill="#f2b83a"/>
<rect x="686" y="695.5" width="4" height="4" fill="#2a9a4a"/><rect x="692" y="695.5" width="4" height="4" fill="#f2b83a"/><rect x="698" y="695.5" width="4" height="4" fill="#f2b83a"/>
</g>
<!-- photo booth -->
<g transform="rotate(-6 736 691)">
<rect x="723" y="677" width="29" height="13" fill="#c81a22" stroke="#f4e8e8" stroke-width="1"/>
</g>
<g transform="rotate(-8 733 695)">
<rect x="719.5" y="683" width="14" height="12" fill="#c81a22" stroke="#f4e8e8" stroke-width="1"/>
<rect x="733.5" y="683" width="14" height="12" fill="#c81a22" stroke="#f4e8e8" stroke-width="1"/>
<rect x="719.5" y="695" width="14" height="12" fill="#c81a22" stroke="#f4e8e8" stroke-width="1"/>
<circle cx="726.5" cy="689.5" r="3.4" fill="#e8b8a8"/><path d="M722.5 689 q4 -7 8 0 v-2 q-4 -5 -8 0z" fill="#1a1010"/>
<circle cx="740.5" cy="689.5" r="3.4" fill="#e8b8a8"/><path d="M736.5 689 q4 -7 8 0 v-2 q-4 -5 -8 0z" fill="#1a1010"/>
<circle cx="726.5" cy="701.5" r="3.4" fill="#e8b8a8"/><path d="M722.5 701 q4 -7 8 0 v-2 q-4 -5 -8 0z" fill="#1a1010"/>
</g>
<circle cx="746" cy="699" r="8.5" fill="#2a2a2e"/>
<circle cx="746" cy="699" r="5" fill="#3a3a5a"/>
<circle cx="745" cy="697.5" r="2" fill="#6a5a9a"/>
<!-- system prefs -->
<rect x="762.5" y="676.5" width="33" height="32" rx="2" fill="url(#sys)"/>
<circle cx="779" cy="692" r="14" fill="#2e3236"/>
<circle cx="779" cy="692" r="11.5" fill="none" stroke="#c8ccd0" stroke-width="2.5" stroke-dasharray="1.6 1.4"/>
<circle cx="779" cy="692" r="9.5" fill="#c0c4c8"/>
<circle cx="779" cy="692" r="7.5" fill="#4a4e52"/>
<path d="M779 692 v-7.5 M779 692 l6.5 3.8 M779 692 l-6.5 3.8" stroke="#c8ccd0" stroke-width="2"/>
<!-- folder 1 -->
<path d="M822 679 h9 l2 2 h25.8 v25 h-36.8z" fill="#5cc8f4"/>
<rect x="822" y="682" width="36.8" height="24" rx="1" fill="url(#fold2)"/>
<!-- folder 2 downloads -->
<path d="M864.5 679 h9 l2 2 h25.5 v25 h-36.5z" fill="#5cc8f4"/>
<rect x="864.5" y="682" width="36.5" height="24" rx="1" fill="url(#fold2)"/>
<circle cx="882.7" cy="693.5" r="7.5" fill="#3aa8dc" opacity="0.8"/>
<path d="M882.7 689 v6 M879.7 692.5 l3 3 l3 -3" fill="none" stroke="#6ad0f8" stroke-width="1.6"/>
<!-- doc w chrome -->
<rect x="907" y="678.5" width="36.8" height="27.5" fill="#fafafa"/>
<text x="924.5" y="694" font-size="7" fill="#555" font-family="Liberation Sans">1</text>
<!-- bar w chrome -->
<rect x="949.5" y="690.8" width="36.5" height="3.2" fill="#c8c8c8"/>
<rect x="973" y="690.8" width="11" height="3.2" fill="#6a8ab8"/>
<!-- chrome badges -->
<circle cx="936" cy="704.5" r="7" fill="#db4437"/>
<path d="M936 704.5 L942.06 701.00 A7 7 0 0 1 936.00 711.50z" fill="#f4c20d"/>
<path d="M936 704.5 L936.00 711.50 A7 7 0 0 1 929.94 701.00z" fill="#1f9d55"/>
<circle cx="936" cy="704.5" r="3.1" fill="#fff"/>
<circle cx="936" cy="704.5" r="2.4" fill="#4a85f0"/>
<circle cx="978.7" cy="704.5" r="7" fill="#db4437"/>
<path d="M978.7 704.5 L984.76 701.00 A7 7 0 0 1 978.70 711.50z" fill="#f4c20d"/>
<path d="M978.7 704.5 L978.70 711.50 A7 7 0 0 1 972.64 701.00z" fill="#1f9d55"/>
<circle cx="978.7" cy="704.5" r="3.1" fill="#fff"/>
<circle cx="978.7" cy="704.5" r="2.4" fill="#4a85f0"/>
<!-- trash -->
<path d="M996.5 677 h27 l-3 32 q0 1.5 -2 1.5 h-17 q-2 0 -2 -1.5z" fill="#e4e8ec" opacity="0.92"/>
<ellipse cx="1010" cy="677.5" rx="13.5" ry="3" fill="#cfd5da"/>
<path d="M1000 677 q3 -4 6 -1 q3 -3 6 0 q4 -3 8 1" fill="#4a5560"/>
<path d="M1004 675 l3 -2 l3 2" fill="#3aa0b0"/>
<!-- running dots -->
<circle cx="269.5" cy="716.5" r="1.2" fill="#111"/>
<circle cx="396.5" cy="716.5" r="1.2" fill="#111"/>
<circle cx="439" cy="716.5" r="1.2" fill="#111"/>
<circle cx="481.5" cy="716.5" r="1.2" fill="#111"/>
</svg>
<!-- sidebar toggle -->
<div class="a" style="left:64px;top:617px;width:22px;height:50.5px;background:linear-gradient(90deg,#d9d9d9,#ececec 40%,#dcdcdc);border:1px solid #6a6a6a;border-left:none;border-radius:0 6px 6px 0"></div>
<svg style="left:0;top:0" width="1280" height="720">
<path d="M68.8 628 l4.5 3.5 -4.5 3.5z M74.6 628 l4.5 3.5 -4.5 3.5z" fill="#444"/>
<g fill="#777">
<circle cx="70" cy="643" r="0.8"/><circle cx="74.3" cy="643" r="0.8"/><circle cx="78.5" cy="643" r="0.8"/>
<circle cx="70" cy="647" r="0.8"/><circle cx="74.3" cy="647" r="0.8"/><circle cx="78.5" cy="647" r="0.8"/>
<circle cx="70" cy="651" r="0.8"/><circle cx="74.3" cy="651" r="0.8"/><circle cx="78.5" cy="651" r="0.8"/>
<circle cx="70" cy="655" r="0.8"/><circle cx="74.3" cy="655" r="0.8"/><circle cx="78.5" cy="655" r="0.8"/>
</g>
</svg>
</body></html>
